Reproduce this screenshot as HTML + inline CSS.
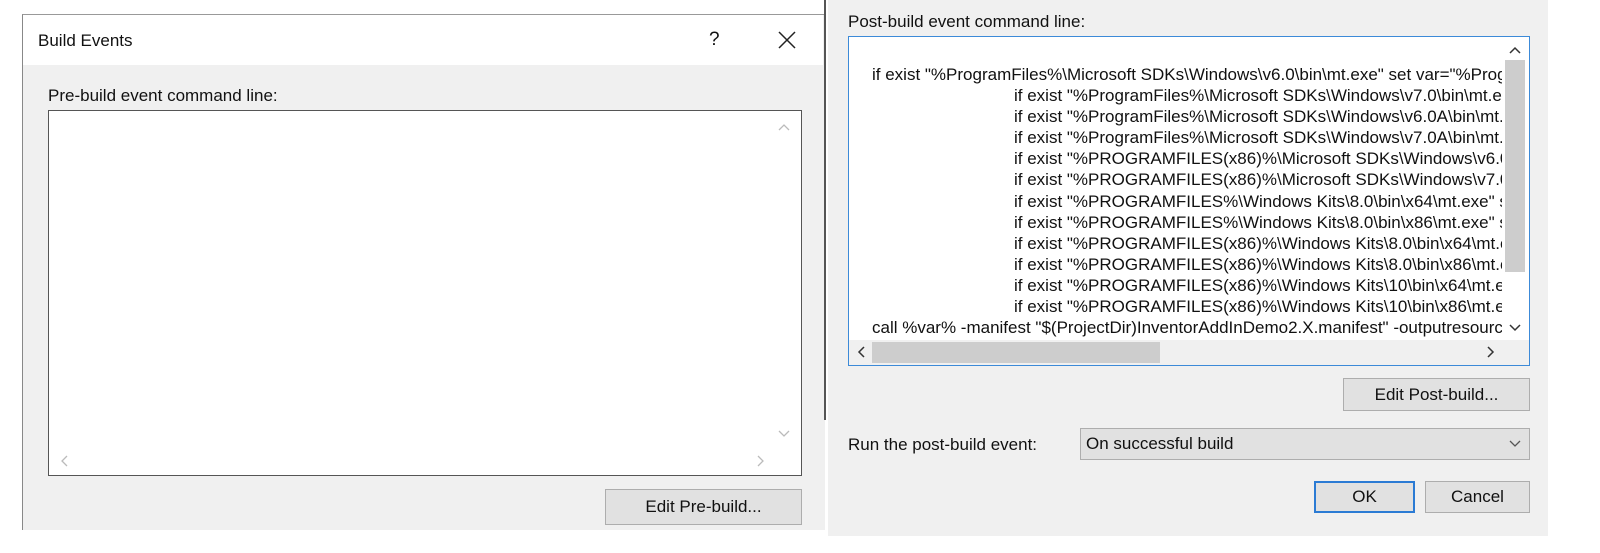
<!DOCTYPE html>
<html><head><meta charset="utf-8"><style>
*{margin:0;padding:0;box-sizing:border-box}
body{width:1600px;height:553px;background:#fff;position:relative;overflow:hidden;font-family:"Liberation Sans",sans-serif;color:#111;font-size:17px}
.a{position:absolute}
.btn{position:absolute;background:#e1e1e1;border:1px solid #adadad;text-align:center;font-size:17px}
.code div{white-space:pre;line-height:21.1px;height:21.1px;padding-left:142px}
.code div.f{padding-left:0}
</style></head><body>
<!-- left dialog -->
<div class="a" style="left:22px;top:14px;width:803px;height:516px;background:#f0f0f0;border-left:1px solid #888;border-top:1px solid #999"></div>
<div class="a" style="left:23px;top:15px;width:800px;height:50px;background:#fff"></div>
<div class="a" style="left:38px;top:31px">Build Events</div>
<div class="a" style="left:709px;top:29px;font-size:19px">?</div>
<svg class="a" style="left:778px;top:31px" width="18" height="18"><path d="M1 1L17 17M17 1L1 17" stroke="#222" stroke-width="1.5"/></svg>
<div class="a" style="left:48px;top:86px">Pre-build event command line:</div>
<div class="a" style="left:48px;top:110px;width:754px;height:366px;background:#fff;border:1px solid #555"></div>
<svg class="a" style="left:778px;top:123px" width="12" height="8"><path d="M1 7L6 2L11 7" stroke="#bbb" fill="none" stroke-width="1.3"/></svg>
<svg class="a" style="left:778px;top:430px" width="12" height="8"><path d="M1 1L6 6L11 1" stroke="#bbb" fill="none" stroke-width="1.3"/></svg>
<svg class="a" style="left:60px;top:455px" width="8" height="12"><path d="M7 1L2 6L7 11" stroke="#bbb" fill="none" stroke-width="1.3"/></svg>
<svg class="a" style="left:757px;top:455px" width="8" height="12"><path d="M1 1L6 6L1 11" stroke="#bbb" fill="none" stroke-width="1.3"/></svg>
<div class="btn" style="left:605px;top:489px;width:197px;height:36px;line-height:34px">Edit Pre-build...</div>
<div class="a" style="left:824px;top:0;width:2px;height:420px;background:#555"></div>
<!-- right panel -->
<div class="a" style="left:828px;top:0;width:720px;height:536px;background:#f0f0f0"></div>
<div class="a" style="left:848px;top:12px">Post-build event command line:</div>
<div class="a" style="left:848px;top:36px;width:682px;height:330px;background:#fff;border:1px solid #3c8ad8"></div>
<div class="a code" style="left:872px;top:64px;width:630px;height:274px;overflow:hidden">
<div class="f">if exist "%ProgramFiles%\Microsoft SDKs\Windows\v6.0\bin\mt.exe" set var="%ProgramFiles%\Microsoft</div>
<div>if exist "%ProgramFiles%\Microsoft SDKs\Windows\v7.0\bin\mt.exe"</div>
<div>if exist "%ProgramFiles%\Microsoft SDKs\Windows\v6.0A\bin\mt.exe"</div>
<div>if exist "%ProgramFiles%\Microsoft SDKs\Windows\v7.0A\bin\mt.exe"</div>
<div>if exist "%PROGRAMFILES(x86)%\Microsoft SDKs\Windows\v6.0A\bin"</div>
<div>if exist "%PROGRAMFILES(x86)%\Microsoft SDKs\Windows\v7.0A\bin"</div>
<div>if exist "%PROGRAMFILES%\Windows Kits\8.0\bin\x64\mt.exe" set var</div>
<div>if exist "%PROGRAMFILES%\Windows Kits\8.0\bin\x86\mt.exe" set var</div>
<div>if exist "%PROGRAMFILES(x86)%\Windows Kits\8.0\bin\x64\mt.exe"</div>
<div>if exist "%PROGRAMFILES(x86)%\Windows Kits\8.0\bin\x86\mt.exe"</div>
<div>if exist "%PROGRAMFILES(x86)%\Windows Kits\10\bin\x64\mt.exe"</div>
<div>if exist "%PROGRAMFILES(x86)%\Windows Kits\10\bin\x86\mt.exe"</div>
<div class="f">call %var% -manifest "$(ProjectDir)InventorAddInDemo2.X.manifest" -outputresource</div>
</div>
<!-- vertical scrollbar -->
<div class="a" style="left:1505px;top:60px;width:20px;height:212px;background:#cdcdcd"></div>
<svg class="a" style="left:1509px;top:46px" width="12" height="8"><path d="M1 7L6 2L11 7" stroke="#333" fill="none" stroke-width="1.5"/></svg>
<svg class="a" style="left:1509px;top:324px" width="12" height="8"><path d="M1 1L6 6L11 1" stroke="#333" fill="none" stroke-width="1.5"/></svg>
<!-- horizontal scrollbar -->
<div class="a" style="left:849px;top:340px;width:680px;height:25px;background:#f0f0f0"></div>
<div class="a" style="left:872px;top:342px;width:288px;height:21px;background:#cdcdcd"></div>
<svg class="a" style="left:857px;top:346px" width="8" height="12"><path d="M7 1L2 6L7 11" stroke="#333" fill="none" stroke-width="1.5"/></svg>
<svg class="a" style="left:1487px;top:346px" width="8" height="12"><path d="M1 1L6 6L1 11" stroke="#333" fill="none" stroke-width="1.5"/></svg>
<div class="btn" style="left:1343px;top:378px;width:187px;height:33px;line-height:31px">Edit Post-build...</div>
<div class="a" style="left:848px;top:435px">Run the post-build event:</div>
<div class="a" style="left:1080px;top:428px;width:450px;height:32px;background:#e1e1e1;border:1px solid #adadad;padding-left:5px;line-height:30px">On successful build</div>
<svg class="a" style="left:1509px;top:440px" width="12" height="8"><path d="M1 1L6 6L11 1" stroke="#555" fill="none" stroke-width="1.3"/></svg>
<div class="btn" style="left:1314px;top:481px;width:101px;height:32px;line-height:28px;border:2px solid #2b7bd4">OK</div>
<div class="btn" style="left:1425px;top:481px;width:105px;height:32px;line-height:30px">Cancel</div>
</body></html>
